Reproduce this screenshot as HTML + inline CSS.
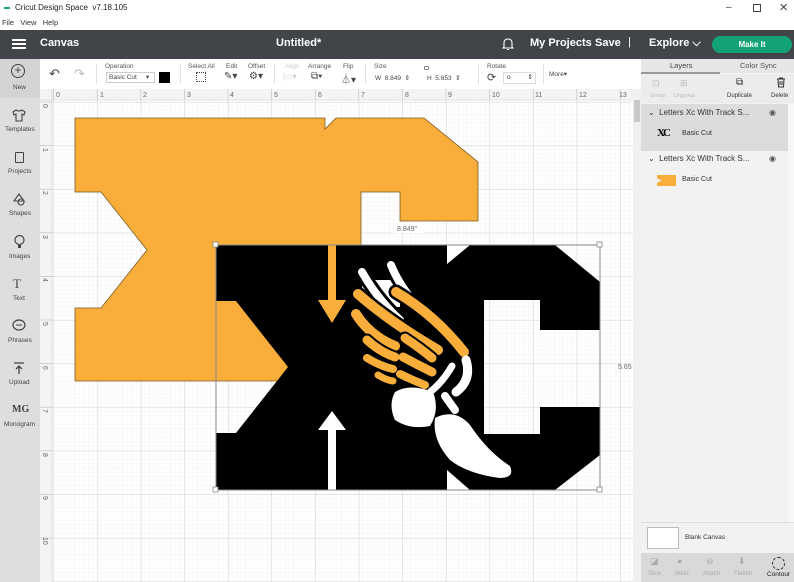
<!DOCTYPE html>
<html><head><meta charset="utf-8"><style>
*{margin:0;padding:0;box-sizing:border-box}
body{width:794px;height:582px;overflow:hidden;position:relative;background:#fff;font-family:"Liberation Sans",sans-serif;color:#333}
.abs{position:absolute}
.t{position:absolute;white-space:nowrap}
</style></head><body>
<div class="abs" style="left:0;top:0;width:794px;height:30px;background:#fff"></div>
<div class="abs" style="left:4px;top:7px;width:6px;height:2px;background:#1da77a"></div>
<div class="t" style="left:15px;top:3px;font-size:8px;color:#222">Cricut Design Space&nbsp; v7.18.105</div>
<div class="t" style="left:2px;top:18px;font-size:7.5px;color:#333">File&nbsp;&nbsp; View&nbsp;&nbsp; Help</div>
<div class="t" style="left:726px;top:2px;font-size:10px;color:#444">–</div>
<div class="abs" style="left:753px;top:4px;width:8px;height:8px;border:1px solid #444"></div>
<div class="t" style="left:779px;top:1px;font-size:11px;color:#444">✕</div>
<div class="abs" style="left:0;top:30px;width:794px;height:29px;background:#414549"></div>
<div class="abs" style="left:12px;top:39px;width:14px;height:2px;background:#fff;box-shadow:0 4px 0 #fff,0 8px 0 #fff"></div>
<div class="t" style="left:40px;top:37px;font-size:11px;color:#fff;font-weight:bold">Canvas</div>
<div class="t" style="left:276px;top:37px;font-size:11px;color:#fff;font-weight:bold">Untitled*</div>
<svg class="abs" style="left:502px;top:37px" width="12" height="14" viewBox="0 0 12 14"><path d="M2 10 L2 6 Q2 2 6 2 Q10 2 10 6 L10 10 L11 11 L1 11 Z M5 12.5 L7 12.5" fill="none" stroke="#fff" stroke-width="1.1"/></svg>
<div class="t" style="left:530px;top:37px;font-size:11px;color:#fff;font-weight:bold">My Projects</div>
<div class="t" style="left:595px;top:37px;font-size:11px;color:#fff;font-weight:bold">Save</div>
<div class="t" style="left:628px;top:36px;font-size:11px;color:#fff">|</div>
<div class="t" style="left:649px;top:37px;font-size:11px;color:#fff;font-weight:bold">Explore ⌵</div>
<div class="abs" style="left:712px;top:36px;width:80px;height:17px;background:#13a275;border-radius:9px;color:#fff;font-size:8px;font-weight:bold;text-align:center;line-height:17px">Make It</div>
<div class="abs" style="left:0;top:59px;width:40px;height:523px;background:#dedede"></div>
<div class="abs" style="left:0;top:59px;width:40px;height:39px;background:#d4d4d4"></div>
<div class="t" style="left:11px;top:64px;width:14px;height:14px;border:1.2px solid #444;border-radius:50%;font-size:12px;line-height:11px;text-align:center;color:#444">+</div>
<div class="t" style="left:13px;top:84px;font-size:6.5px;color:#444">New</div>
<svg class="abs" style="left:12px;top:109px" width="14" height="13"><path d="M4 1 L1 3 L2 6 L4 5 V12 H10 V5 L12 6 L13 3 L10 1 Q7 3 4 1 Z" fill="none" stroke="#444" stroke-width="1.1"/></svg>
<div class="t" style="left:5px;top:126px;font-size:6.5px;color:#444">Templates</div>
<div class="abs" style="left:15px;top:152px;width:9px;height:11px;border:1.2px solid #444;border-radius:1px"></div>
<div class="t" style="left:8px;top:168px;font-size:6.5px;color:#444">Projects</div>
<svg class="abs" style="left:13px;top:193px" width="13" height="13"><path d="M6 1 L11 8 L1 8 Z" fill="none" stroke="#444" stroke-width="1.1"/><circle cx="8" cy="9" r="3" fill="none" stroke="#444" stroke-width="1.1"/></svg>
<div class="t" style="left:9px;top:210px;font-size:6.5px;color:#444">Shapes</div>
<svg class="abs" style="left:14px;top:235px" width="11" height="14"><ellipse cx="5.5" cy="5" rx="4.5" ry="4.5" fill="none" stroke="#444" stroke-width="1.2"/><rect x="4" y="10" width="3" height="3" fill="#444"/></svg>
<div class="t" style="left:9px;top:253px;font-size:6.5px;color:#444">Images</div>
<div class="t" style="left:13px;top:276px;font-size:13px;color:#444;font-family:'Liberation Serif',serif">T</div>
<div class="t" style="left:13px;top:295px;font-size:6.5px;color:#444">Text</div>
<svg class="abs" style="left:12px;top:319px" width="14" height="13"><ellipse cx="7" cy="6" rx="6" ry="5" fill="none" stroke="#444" stroke-width="1.2"/><path d="M4 6 H10" stroke="#444"/></svg>
<div class="t" style="left:8px;top:337px;font-size:6.5px;color:#444">Phrases</div>
<svg class="abs" style="left:13px;top:362px" width="12" height="13"><path d="M1 1 H11 M6 12 V4 M3 7 L6 4 L9 7" fill="none" stroke="#444" stroke-width="1.3"/></svg>
<div class="t" style="left:9px;top:379px;font-size:6.5px;color:#444">Upload</div>
<div class="t" style="left:12px;top:404px;font-size:10px;color:#444;font-weight:bold;font-family:'Liberation Serif',serif">MG</div>
<div class="t" style="left:4px;top:421px;font-size:6.5px;color:#444">Monogram</div>
<div class="abs" style="left:40px;top:59px;width:601px;height:30px;background:#fff"></div>
<div class="t" style="left:49px;top:66px;font-size:13px;color:#444">↶</div>
<div class="t" style="left:74px;top:66px;font-size:13px;color:#bbb">↷</div>
<div class="abs" style="left:96px;top:64px;width:1px;height:20px;background:#e2e2e2"></div>
<div class="t" style="left:105px;top:63px;font-size:6.5px;color:#555">Operation</div>
<div class="abs" style="left:106px;top:72px;width:49px;height:11px;border:1px solid #ccc;font-size:6.5px;line-height:9px;padding-left:2px;color:#444">Basic Cut&nbsp;&nbsp;&nbsp;&nbsp;&nbsp;▾</div>
<div class="abs" style="left:159px;top:72px;width:11px;height:11px;background:#000"></div>
<div class="abs" style="left:180px;top:64px;width:1px;height:20px;background:#e2e2e2"></div>
<div class="t" style="left:188px;top:63px;font-size:6.5px;color:#555">Select All</div>
<div class="abs" style="left:196px;top:72px;width:10px;height:10px;border:1.2px dotted #444"></div>
<div class="t" style="left:226px;top:63px;font-size:6.5px;color:#555">Edit</div>
<div class="t" style="left:224px;top:71px;font-size:10px;color:#444">✎▾</div>
<div class="t" style="left:248px;top:63px;font-size:6.5px;color:#555">Offset</div>
<div class="t" style="left:249px;top:71px;font-size:10px;color:#444">⚙▾</div>
<div class="abs" style="left:274px;top:64px;width:1px;height:20px;background:#e2e2e2"></div>
<div class="t" style="left:285px;top:63px;font-size:6.5px;color:#ccc">Align</div>
<div class="t" style="left:283px;top:72px;font-size:8px;color:#ccc">|▭▾</div>
<div class="t" style="left:308px;top:63px;font-size:6.5px;color:#555">Arrange</div>
<div class="t" style="left:311px;top:71px;font-size:10px;color:#444">⧉▾</div>
<div class="t" style="left:343px;top:63px;font-size:6.5px;color:#555">Flip</div>
<div class="t" style="left:341px;top:71px;font-size:10px;color:#444">⏃▾</div>
<div class="abs" style="left:365px;top:64px;width:1px;height:20px;background:#e2e2e2"></div>
<div class="t" style="left:374px;top:63px;font-size:6.5px;color:#555">Size</div>
<div class="t" style="left:375px;top:74px;font-size:6.5px;color:#444">W&nbsp; 8.849&nbsp; ⇕</div>
<div class="abs" style="left:424px;top:66px;width:5px;height:4px;border:1px solid #888;border-radius:1px"></div>
<div class="t" style="left:427px;top:74px;font-size:6.5px;color:#444">H&nbsp; 5.653&nbsp; ⇕</div>
<div class="abs" style="left:478px;top:64px;width:1px;height:20px;background:#e2e2e2"></div>
<div class="t" style="left:487px;top:63px;font-size:6.5px;color:#555">Rotate</div>
<div class="t" style="left:487px;top:71px;font-size:11px;color:#444">⟳</div>
<div class="abs" style="left:503px;top:72px;width:33px;height:12px;border:1px solid #ddd;font-size:6.5px;line-height:10px;padding-left:3px">o<span style="float:right;padding-right:2px">⇕</span></div>
<div class="abs" style="left:543px;top:64px;width:1px;height:20px;background:#e2e2e2"></div>
<div class="t" style="left:549px;top:70px;font-size:6.5px;color:#444">More▾</div>
<svg class="abs" style="left:40px;top:89px" width="601" height="493" viewBox="40 89 601 493">
<defs>
<pattern id="mn" x="53.6" y="102" width="4.36" height="4.36" patternUnits="userSpaceOnUse"><path d="M4.36 0 V4.36 M0 4.36 H4.36" stroke="#ececec" stroke-width="0.6" fill="none"/></pattern>
<pattern id="mj" x="53.6" y="102" width="43.6" height="43.6" patternUnits="userSpaceOnUse"><path d="M0 0 V43.6 M0 0 H43.6" stroke="#c8c8c8" stroke-width="0.8" fill="none"/></pattern>
</defs>
<rect x="52" y="100" width="581" height="482" fill="#fff"/>
<rect x="52" y="100" width="581" height="482" fill="url(#mn)"/>
<rect x="52" y="100" width="581" height="482" fill="url(#mj)"/>
<rect x="40" y="89" width="593" height="11" fill="#f4f4f4"/>
<rect x="40" y="89" width="12" height="493" fill="#f4f4f4"/>
<line x1="40" y1="100" x2="633" y2="100" stroke="#ccc" stroke-width="0.6"/>
<line x1="52" y1="89" x2="52" y2="582" stroke="#ccc" stroke-width="0.6"/>
<g font-size="7" fill="#666" font-family="Liberation Sans">
<text x="56" y="97">0</text><text x="100" y="97">1</text><text x="143" y="97">2</text><text x="187" y="97">3</text><text x="230" y="97">4</text><text x="274" y="97">5</text><text x="318" y="97">6</text><text x="361" y="97">7</text><text x="405" y="97">8</text><text x="448" y="97">9</text><text x="492" y="97">10</text><text x="535" y="97">11</text><text x="579" y="97">12</text><text x="619" y="97">13</text>
</g>
<g stroke="#bbb" stroke-width="0.6">
<path d="M53.6 89 V100 M97.2 89 V100 M140.8 89 V100 M184.4 89 V100 M228 89 V100 M271.6 89 V100 M315.2 89 V100 M358.8 89 V100 M402.4 89 V100 M446 89 V100 M489.6 89 V100 M533.2 89 V100 M576.8 89 V100 M620.4 89 V100"/>
<path d="M40 102 H52 M40 145.6 H52 M40 189.2 H52 M40 232.8 H52 M40 276.4 H52 M40 320 H52 M40 363.6 H52 M40 407.2 H52 M40 450.8 H52 M40 494.4 H52 M40 538 H52"/>
</g>
<g font-size="7" fill="#666" font-family="Liberation Sans">
<text transform="translate(43,104) rotate(90)">0</text><text transform="translate(43,148) rotate(90)">1</text><text transform="translate(43,191) rotate(90)">2</text><text transform="translate(43,235) rotate(90)">3</text><text transform="translate(43,278) rotate(90)">4</text><text transform="translate(43,322) rotate(90)">5</text><text transform="translate(43,366) rotate(90)">6</text><text transform="translate(43,409) rotate(90)">7</text><text transform="translate(43,453) rotate(90)">8</text><text transform="translate(43,496) rotate(90)">9</text><text transform="translate(43,537) rotate(90)">10</text>
</g>
<path d="M75 118 H325 V129 L336 118 H424 L478 162 V221 H400 V192 H361 V381 H75 V308 H101 L147 250 L101 192 H75 Z" fill="#f9ae3b" stroke="#7a5a20" stroke-width="0.8"/>
<path d="M216 245 H555 L600 282 V330 H540 V300 H484 V434 H540 V407 H600 V455 L555 490 H216 V433 H236 L288 367 L236 301 H216 Z" fill="#000"/>
<path d="M447 245 H470 L447 264 Z M447 490 H470 L447 470 Z" fill="#fff"/>
<rect x="362" y="280" width="38" height="27" fill="#fff"/>
<path d="M328 245 H336 V300 H346 L332 323 L318 300 H328 Z" fill="#f9ae3b"/>
<path d="M328 490 H336 V430 H346 L332 411 L318 430 H328 Z" fill="#fff"/>
<g stroke-linecap="round" fill="none">
<path d="M362 272 Q378 300 400 320" stroke="#000" stroke-width="14"/>
<path d="M362 272 Q378 300 400 320" stroke="#fff" stroke-width="8"/>
<path d="M391 265 Q405 300 450 338" stroke="#000" stroke-width="14"/>
<path d="M391 265 Q405 300 450 338" stroke="#fff" stroke-width="8"/>
<path d="M396 292 Q435 315 464 352" stroke="#000" stroke-width="15"/>
<path d="M396 292 Q435 315 464 352" stroke="#f9ae3b" stroke-width="10"/>
<path d="M358 294 Q390 322 438 350" stroke="#000" stroke-width="15"/>
<path d="M358 294 Q390 322 438 350" stroke="#f9ae3b" stroke-width="10"/>
<path d="M356 314 Q370 336 395 346" stroke="#000" stroke-width="15"/>
<path d="M356 314 Q370 336 395 346" stroke="#f9ae3b" stroke-width="10"/>
<path d="M367 340 Q380 352 395 357" stroke="#000" stroke-width="13"/>
<path d="M367 340 Q380 352 395 357" stroke="#f9ae3b" stroke-width="9"/>
<path d="M367 358 Q380 366 393 369" stroke="#f9ae3b" stroke-width="8"/>
<path d="M378 375 Q386 380 393 381" stroke="#f9ae3b" stroke-width="7"/>
<path d="M405 338 Q420 348 432 358" stroke="#000" stroke-width="13"/>
<path d="M405 338 Q420 348 432 358" stroke="#f9ae3b" stroke-width="9"/>
<path d="M403 357 Q418 365 432 372" stroke="#f9ae3b" stroke-width="9"/>
<path d="M400 374 Q412 380 425 385" stroke="#f9ae3b" stroke-width="8"/>
<path d="M466 360 Q472 380 456 392" stroke="#fff" stroke-width="9"/>
<path d="M452 366 Q442 383 430 392" stroke="#fff" stroke-width="7"/>
<path d="M445 396 L455 410" stroke="#fff" stroke-width="8"/>
</g>
<path d="M395 392 Q410 383 433 392 Q440 410 430 426 Q410 430 395 420 Q388 405 395 392 Z" fill="#fff"/>
<path d="M435 418 Q455 408 470 425 Q488 452 510 466 Q515 478 500 478 Q468 474 450 460 Q432 440 435 418 Z" fill="#fff"/>
<rect x="216" y="245" width="384" height="245" fill="none" stroke="#888" stroke-width="1"/>
<g fill="#fff" stroke="#888" stroke-width="0.8"><rect x="213" y="242" width="5" height="5"/><rect x="597" y="242" width="5" height="5"/><rect x="213" y="487" width="5" height="5"/><rect x="597" y="487" width="5" height="5"/></g>
<rect x="394" y="223" width="30" height="10" fill="#fff"/>
<text x="397" y="231" font-size="7" fill="#666" font-family="Liberation Sans">8.849"</text>
<text x="618" y="369" font-size="7" fill="#666" font-family="Liberation Sans">5.65</text>
<rect x="633" y="89" width="8" height="493" fill="#f0f0f0"/>
<rect x="634" y="100" width="6" height="22" fill="#c8c8c8"/>
</svg>
<div class="abs" style="left:641px;top:59px;width:153px;height:523px;background:#f2f2f2"></div>
<div class="abs" style="left:641px;top:59px;width:153px;height:14px;background:#e6e6e6"></div>
<div class="abs" style="left:641px;top:72px;width:79px;height:1.5px;background:#999"></div>
<div class="t" style="left:670px;top:61px;font-size:7.5px;color:#444">Layers</div>
<div class="t" style="left:740px;top:61px;font-size:7.5px;color:#555">Color Sync</div>
<div class="abs" style="left:641px;top:74px;width:153px;height:29px;background:#ececec"></div>
<div class="t" style="left:652px;top:78px;font-size:9px;color:#bbb">⊡</div>
<div class="t" style="left:650px;top:93px;font-size:5.5px;color:#bbb">Group</div>
<div class="t" style="left:680px;top:78px;font-size:9px;color:#bbb">⊞</div>
<div class="t" style="left:674px;top:93px;font-size:5.5px;color:#bbb">Ungroup</div>
<div class="t" style="left:736px;top:77px;font-size:10px;color:#333">⧉</div>
<div class="t" style="left:727px;top:93px;font-size:6px;color:#333">Duplicate</div>
<svg class="abs" style="left:776px;top:77px" width="10" height="11"><path d="M1 2 H9 M3.5 2 V1 H6.5 V2 M2 2 L2.5 10 H7.5 L8 2 M4 4 V8 M6 4 V8" fill="none" stroke="#333" stroke-width="1"/></svg>
<div class="t" style="left:771px;top:93px;font-size:6px;color:#333">Delete</div>
<div class="abs" style="left:641px;top:104px;width:147px;height:47px;background:#dcdcdc"></div>
<div class="t" style="left:648px;top:108px;font-size:8px;color:#333">⌄&nbsp; Letters Xc With Track S...</div>
<div class="t" style="left:769px;top:108px;font-size:8px;color:#555">◉</div>
<div class="t" style="left:657px;top:127px;font-size:11px;color:#000;font-weight:bold;letter-spacing:-2px;font-family:'Liberation Serif',serif">XC</div>
<div class="t" style="left:682px;top:130px;font-size:7px;color:#333">Basic Cut</div>
<div class="t" style="left:648px;top:154px;font-size:8px;color:#333">⌄&nbsp; Letters Xc With Track S...</div>
<div class="t" style="left:769px;top:154px;font-size:8px;color:#555">◉</div>
<div class="abs" style="left:657px;top:175px;width:19px;height:11px;background:#f9ae3b;clip-path:polygon(0 0,100% 0,100% 100%,0 100%,0 70%,25% 50%,0 30%)"></div>
<div class="t" style="left:682px;top:176px;font-size:7px;color:#333">Basic Cut</div>
<div class="abs" style="left:788px;top:104px;width:6px;height:420px;background:#f7f7f7"></div>
<div class="abs" style="left:641px;top:522px;width:153px;height:1px;background:#ddd"></div>
<div class="abs" style="left:647px;top:527px;width:32px;height:22px;background:#fff;border:1px solid #bbb"></div>
<div class="t" style="left:685px;top:534px;font-size:6.5px;color:#333">Blank Canvas</div>
<div class="abs" style="left:641px;top:553px;width:153px;height:29px;background:#d9d9d9"></div>
<div class="t" style="left:650px;top:556px;font-size:9px;color:#aaa">◪</div>
<div class="t" style="left:648px;top:571px;font-size:6px;color:#aaa">Slice</div>
<div class="t" style="left:677px;top:556px;font-size:9px;color:#aaa">●</div>
<div class="t" style="left:675px;top:571px;font-size:6px;color:#aaa">Weld</div>
<div class="t" style="left:706px;top:556px;font-size:9px;color:#aaa">⊖</div>
<div class="t" style="left:703px;top:571px;font-size:6px;color:#aaa">Attach</div>
<div class="t" style="left:738px;top:556px;font-size:9px;color:#aaa">⬇</div>
<div class="t" style="left:734px;top:571px;font-size:6px;color:#aaa">Flatten</div>
<div class="abs" style="left:772px;top:557px;width:13px;height:13px;border:1.2px dashed #333;border-radius:50%"></div>
<div class="t" style="left:767px;top:571px;font-size:6.5px;color:#222">Contour</div>
</body></html>
